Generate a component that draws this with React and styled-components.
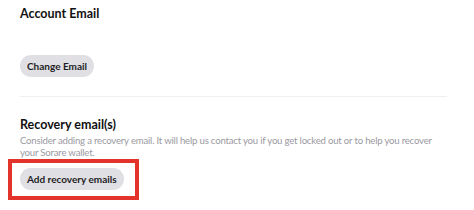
import styled, { createGlobalStyle } from "styled-components";

const GlobalStyle = createGlobalStyle`
  body {
    margin: 0;
    background: #ffffff;
    font-family: Lato, "Liberation Sans", sans-serif;
  }
`;

const StyledPage = styled.div`
  display: flex;
  flex-direction: column;
  width: 474px;
  height: 210px;
  box-sizing: border-box;
  padding: 6px 27px 0 20px;
  overflow: hidden;
`;

const StyledSection = styled.section`
  display: flex;
  flex-direction: column;
  align-items: flex-start;
`;

const StyledTitle = styled.h2`
  margin: 0;
  font-size: 12.5px;
  font-weight: 700;
  line-height: 16px;
  color: #111111;
`;

const StyledDescription = styled.p`
  margin: 2px 0 0;
  font-size: 9.6px;
  letter-spacing: -0.2px;
  line-height: 12px;
  color: #9a9a9f;
`;

const StyledButton = styled.button`
  display: inline-flex;
  align-items: center;
  height: 22px;
  padding: 0 7px;
  border: none;
  border-radius: 11px;
  background: #dfdfe4;
  font-family: inherit;
  font-size: 10px;
  font-weight: 700;
  color: #1e1e24;
  cursor: pointer;
`;

const StyledDivider = styled.hr`
  width: 100%;
  margin: 19px 0 20px;
  border: none;
  border-top: 1px solid #efeff1;
`;

const StyledHighlight = styled.div`
  margin: 0 0 0 -12px;
  padding: 4px 11px 6px 8px;
  border: 4px solid #e2342b;
`;

function App() {
  return (
    <>
      <GlobalStyle />
      <StyledPage>
        <StyledSection>
          <StyledTitle>Account Email</StyledTitle>
          <StyledButton style={{ marginTop: 33 }}>Change Email</StyledButton>
        </StyledSection>
        <StyledDivider />
        <StyledSection>
          <StyledTitle>Recovery email(s)</StyledTitle>
          <StyledDescription>
            Consider adding a recovery email. It will help us contact you if you
            get locked out or to help you recover your Sorare wallet.
          </StyledDescription>
          <StyledHighlight>
            <StyledButton>Add recovery emails</StyledButton>
          </StyledHighlight>
        </StyledSection>
      </StyledPage>
    </>
  );
}

export default App;
